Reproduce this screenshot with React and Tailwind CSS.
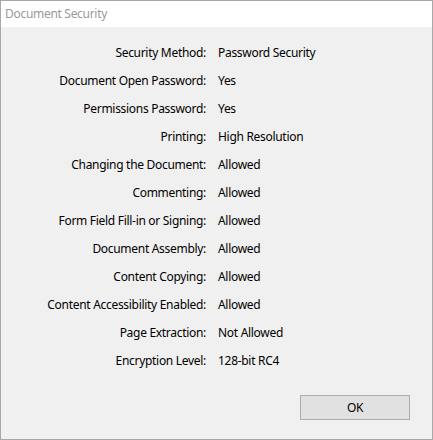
import React from 'react';

const rows = [
    ['Security Method:', 'Password Security'],
    ['Document Open Password:', 'Yes'],
    ['Permissions Password:', 'Yes'],
    ['Printing:', 'High Resolution'],
    ['Changing the Document:', 'Allowed'],
    ['Commenting:', 'Allowed'],
    ['Form Field Fill-in or Signing:', 'Allowed'],
    ['Document Assembly:', 'Allowed'],
    ['Content Copying:', 'Allowed'],
    ['Content Accessibility Enabled:', 'Allowed'],
    ['Page Extraction:', 'Not Allowed'],
    ['Encryption Level:', '128-bit RC4'],
];

const App = () => {
    return (
        <div className="w-[433px] h-[440px] border border-[#a8a8a8] bg-[#f0f0f0] flex flex-col text-[12px] tracking-[-0.3px] text-black font-['Noto_Sans',sans-serif]">
            {/* Title bar */}
            <div className="h-[26px] bg-white flex items-center pl-[4px] text-[#999999] shrink-0">
                Document Security
            </div>

            {/* Properties */}
            <div className="grid grid-cols-[205px_1fr] gap-x-[12px] pt-[12px]">
                {rows.map(([label, value]) => (
                    <React.Fragment key={label}>
                        <div className="h-[28px] flex items-center justify-end">{label}</div>
                        <div className="h-[28px] flex items-center">{value}</div>
                    </React.Fragment>
                ))}
            </div>

            {/* Footer */}
            <div className="flex justify-end pr-[22px] mt-[20px]">
                <button className="w-[110px] h-[25px] border border-[#adadad] bg-[#e1e1e1] flex items-center justify-center">
                    OK
                </button>
            </div>
        </div>
    );
};

export default App;
